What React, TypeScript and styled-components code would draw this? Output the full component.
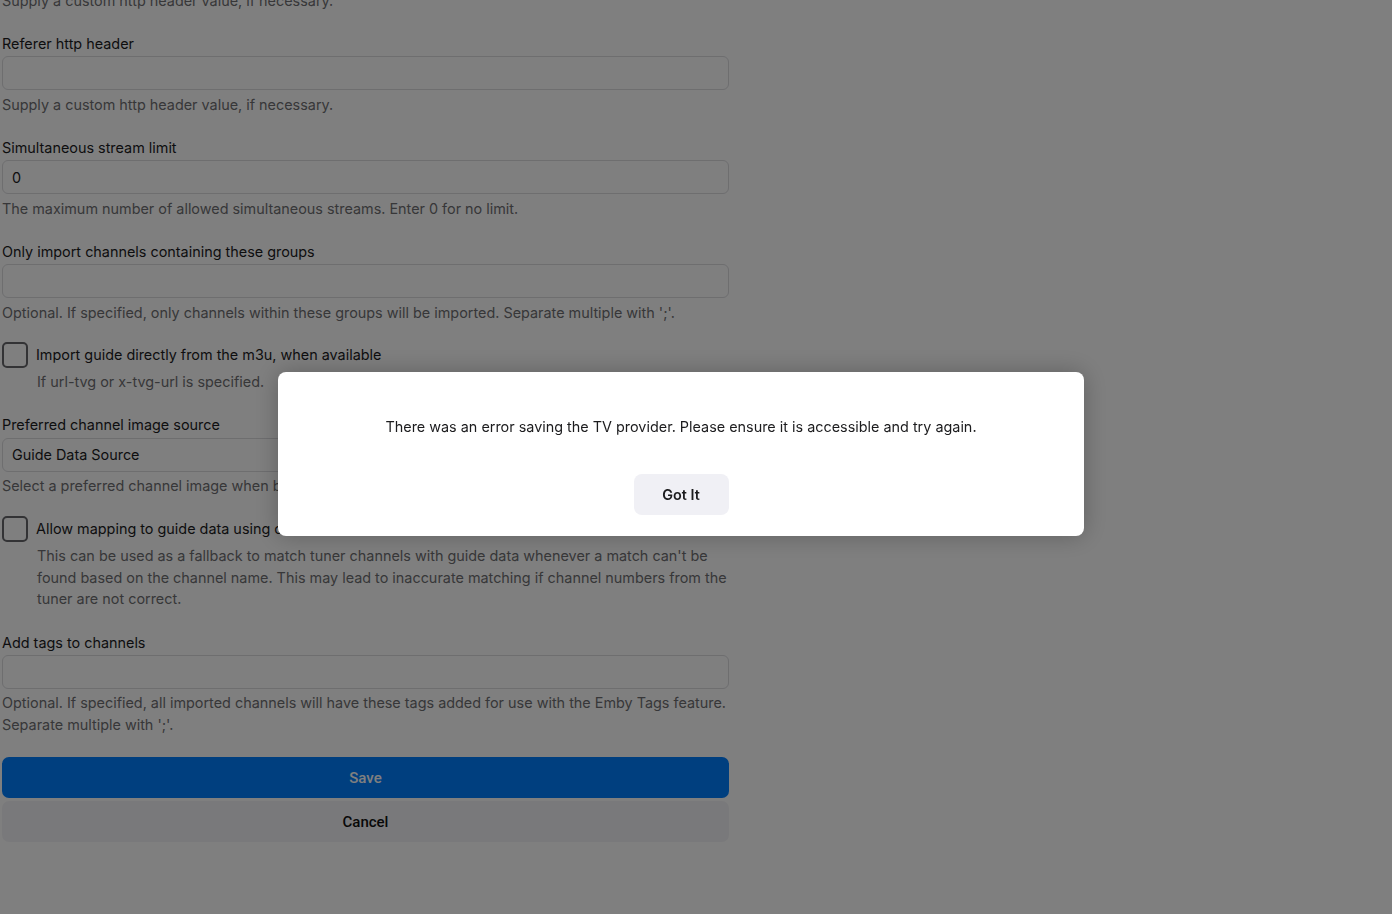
import React from 'react';
import styled, { createGlobalStyle } from 'styled-components';

const GlobalStyle = createGlobalStyle`
  html, body {
    margin: 0;
    padding: 0;
    background: #fff;
    overflow: hidden;
  }
  body {
    font-family: Inter, "Noto Sans", sans-serif;
    font-size: 14.4px;
    line-height: 21.45px;
    color: #222;
  }
`;

const Page = styled.div`
  height: 914px;
  padding: 0 0 0 2px;
`;

const Form = styled.form`
  width: 727px;
  margin-top: -13.7px;
  display: flex;
  flex-direction: column;
`;

const Field = styled.div<{ $top?: number; $bottom?: number }>`
  display: flex;
  flex-direction: column;
  margin-top: ${p => p.$top ?? 0}px;
  margin-bottom: ${p => p.$bottom ?? 21}px;
`;

const Label = styled.label`
  color: #1c1c1e;
`;

const TextInput = styled.input`
  box-sizing: border-box;
  height: 34px;
  margin-top: 2px;
  padding: 0 9px;
  border: 1px solid #dcdcdf;
  border-radius: 6px;
  background: #fff;
  font: inherit;
  color: #1c1c1e;
  outline: none;
`;

const Select = styled.div`
  box-sizing: border-box;
  height: 34px;
  margin-top: 3px;
  padding: 0 9px;
  border: 1px solid #dcdcdf;
  border-radius: 6px;
  display: flex;
  align-items: center;
  color: #1c1c1e;
`;

const Desc = styled.div<{ $indent?: boolean; $gap?: number }>`
  color: #6f6f72;
  margin-top: ${p => p.$gap ?? (p.$indent ? 3 : 4)}px;
  padding-left: ${p => (p.$indent ? '35px' : '0')};
  line-height: ${p => (p.$indent ? '21.6px' : '21.45px')};
`;

const CheckRow = styled.label`
  display: flex;
  align-items: center;
  gap: 8px;
  color: #1c1c1e;
`;

const Box = styled.span`
  box-sizing: border-box;
  width: 26px;
  height: 26px;
  border: 2px solid #66666a;
  border-radius: 5px;
  flex: none;
`;

const Btn = styled.button<{ $primary?: boolean }>`
  height: 41px;
  border: none;
  border-radius: 7px;
  font-family: Roboto, "Liberation Sans", sans-serif;
  font-size: 15px;
  font-weight: 500;
  color: ${p => (p.$primary ? '#fff' : '#111')};
  background: ${p => (p.$primary ? '#007eff' : '#f3f3f6')};
  margin-top: ${p => (p.$primary ? '1px' : '3px')};
`;

const Backdrop = styled.div`
  position: fixed;
  inset: 0;
  background: rgba(0, 0, 0, 0.5);
  display: flex;
  align-items: center;
  justify-content: center;
  padding-right: 30px;
  padding-bottom: 6px;
`;

const Dialog = styled.div`
  box-sizing: border-box;
  width: 806px;
  height: 164px;
  background: #fff;
  border-radius: 8px;
  box-shadow: 0 0 24px rgba(0, 0, 0, 0.25);
  padding: 44px 20px 21px;
  display: flex;
  flex-direction: column;
  align-items: center;
`;

const Message = styled.div`
  color: #1c1c1e;
  text-align: center;
`;

const GotIt = styled.button`
  margin-top: auto;
  width: 95px;
  height: 41px;
  border: none;
  border-radius: 8px;
  background: #f0f0f5;
  font-family: Inter, "Noto Sans", sans-serif;
  font-size: 14.4px;
  font-weight: 600;
  color: #1c1c1e;
  padding-bottom: 2px;
`;

export default function App() {
  return (
    <>
      <GlobalStyle />
      <Page>
        <Form>
          <Field>
            <Desc>Supply a custom http header value, if necessary.</Desc>
          </Field>
          <Field>
            <Label>Referer http header</Label>
            <TextInput />
            <Desc>Supply a custom http header value, if necessary.</Desc>
          </Field>
          <Field>
            <Label>Simultaneous stream limit</Label>
            <TextInput defaultValue="0" />
            <Desc>The maximum number of allowed simultaneous streams. Enter 0 for no limit.</Desc>
          </Field>
          <Field>
            <Label>Only import channels containing these groups</Label>
            <TextInput />
            <Desc>Optional. If specified, only channels within these groups will be imported. Separate multiple with ';'.</Desc>
          </Field>
          <Field $top={-2.5}>
            <CheckRow>
              <Box />
              Import guide directly from the m3u, when available
            </CheckRow>
            <Desc $indent>If url-tvg or x-tvg-url is specified.</Desc>
          </Field>
          <Field>
            <Label>Preferred channel image source</Label>
            <Select>Guide Data Source</Select>
            <Desc $gap={3}>Select a preferred channel image when both the tuner and guide data provide one.</Desc>
          </Field>
          <Field $top={-1.5} $bottom={22}>
            <CheckRow>
              <Box />
              Allow mapping to guide data using channel numbers
            </CheckRow>
            <Desc $indent>
              This can be used as a fallback to match tuner channels with guide data whenever a match can't be found based on the channel name. This may lead to inaccurate matching if channel numbers from the tuner are not correct.
            </Desc>
          </Field>
          <Field>
            <Label>Add tags to channels</Label>
            <TextInput />
            <Desc $gap={3}>Optional. If specified, all imported channels will have these tags added for use with the Emby Tags feature. Separate multiple with ';'.</Desc>
          </Field>
          <Btn type="button" $primary>Save</Btn>
          <Btn type="button">Cancel</Btn>
        </Form>
      </Page>
      <Backdrop>
        <Dialog>
          <Message>There was an error saving the TV provider. Please ensure it is accessible and try again.</Message>
          <GotIt type="button">Got It</GotIt>
        </Dialog>
      </Backdrop>
    </>
  );
}
